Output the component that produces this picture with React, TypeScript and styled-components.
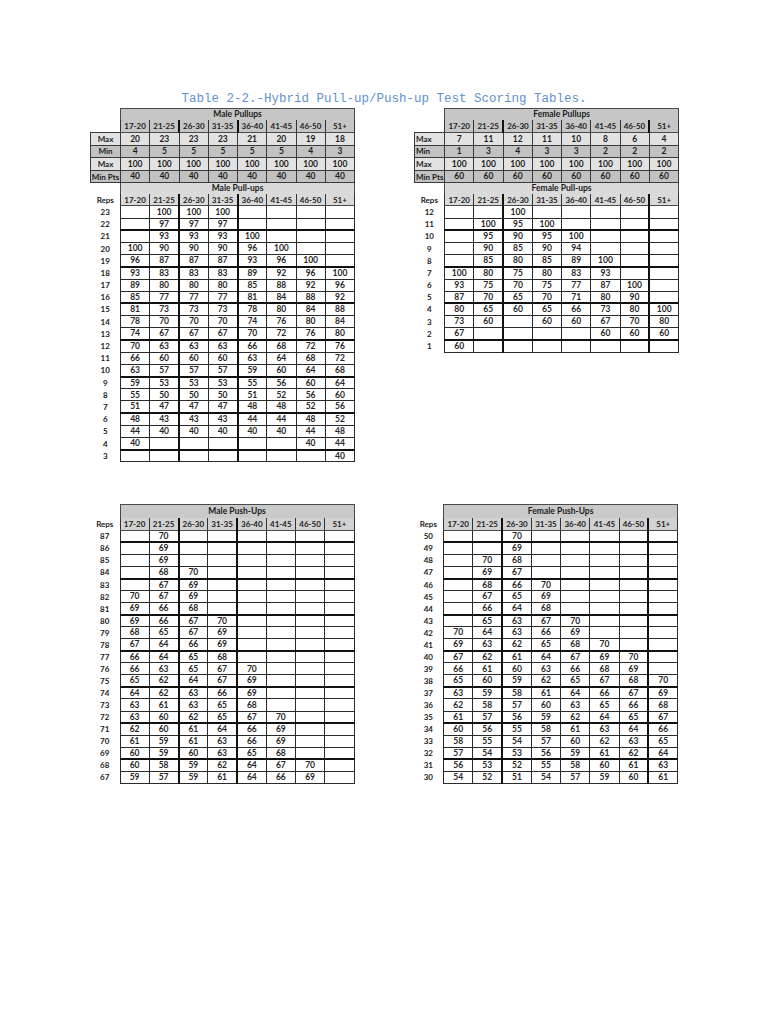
import * as React from 'react';
import styled, { createGlobalStyle } from 'styled-components';

type Cell = string | number;
type DataRow = [Cell, ...Cell[]];

const AGES = ['17-20', '21-25', '26-30', '31-35', '36-40', '41-45', '46-50', '51+'];

const GlobalStyle = createGlobalStyle`
  html, body {
    margin: 0;
    padding: 0;
    background: #ffffff;
  }
  body {
    font-family: Lato, "Liberation Sans", sans-serif;
  }
`;

const Sheet = styled.div`
  width: 768px;
  min-height: 1024px;
  box-sizing: border-box;
  padding-top: 92px;
`;

const Title = styled.h1`
  margin: 0;
  font: 400 12.5px/14px "Liberation Mono", monospace;
  color: #5f93cc;
  text-align: center;
`;

const Pair = styled.div<{ $top: number }>`
  display: flex;
  align-items: flex-start;
  gap: 59px;
  padding-left: 90px;
  margin-top: ${(p) => p.$top}px;
`;

const Grid = styled.table`
  border-collapse: collapse;
  table-layout: fixed;
  width: 264px;
  font: 700 8.5px/1 Lato, "Liberation Sans", sans-serif;
  color: #1c1c1c;

  td {
    padding: 0;
    text-align: center;
    vertical-align: middle;
    white-space: nowrap;
    overflow: hidden;
  }
`;

const Col = styled.col<{ $w: number }>`
  width: ${(p) => p.$w}px;
`;

const Line = styled.tr<{ $h: number }>`
  height: ${(p) => p.$h}px;
`;

const Blank = styled.td`
  border: none;
`;

const Banner = styled.td<{ $bg: string }>`
  background: ${(p) => p.$bg};
  border: 1px solid #4a4a4a;
  border-bottom: none;
`;

const AgeCell = styled.td<{ $bg: string; $thick?: boolean }>`
  background: ${(p) => p.$bg};
  border-left: ${(p) => (p.$thick ? '2px solid #111' : '1px solid #333')};
  border-right: 1px solid #333;
  border-bottom: 1px solid #4a4a4a;
  font-size: 8px;
`;

const StatLabel = styled.td<{ $bg: string; $align: 'left' | 'center' }>`
  background: ${(p) => p.$bg};
  border: 1px solid #3a3a3a;
  td& {
    text-align: ${(p) => p.$align};
    padding-left: ${(p) => (p.$align === 'left' ? '1px' : '0')};
  }
  font-size: 8px;
`;

const StatCell = styled.td<{ $bg: string }>`
  background: ${(p) => p.$bg};
  border: 1px solid #3a3a3a;
`;

const RepCell = styled.td`
  border: none;
  font-size: 8px;
`;

const DataCell = styled.td<{ $thickTop?: boolean; $thickLeft?: boolean }>`
  background: #ffffff;
  border: 1px solid #2a2a2a;
  border-top: ${(p) => (p.$thickTop ? '2px solid #111' : '1px solid #2a2a2a')};
  border-left: ${(p) => (p.$thickLeft ? '2px solid #111' : '1px solid #2a2a2a')};
  font-weight: 700;
  font-size: 8.5px;
  color: #262626;
`;

const Columns = () => (
  <colgroup>
    <Col $w={30} />
    {AGES.map((a) => (
      <Col key={a} $w={29.25} />
    ))}
  </colgroup>
);

interface BodyProps {
  rows: DataRow[];
  rowH: number;
  thickCols: number[];
  thickMod: number;
}

const Body = ({ rows, rowH, thickCols, thickMod }: BodyProps) => (
  <>
    {rows.map(([rep, ...vals], i) => (
      <Line key={String(rep)} $h={rowH}>
        <RepCell>{rep}</RepCell>
        {AGES.map((a, c) => (
          <DataCell key={a} $thickTop={i % 3 === thickMod} $thickLeft={thickCols.includes(c)}>
            {vals[c] ?? ''}
          </DataCell>
        ))}
      </Line>
    ))}
  </>
);

const STAT_BG = ['#e2e2e2', '#c2c2c2', '#e2e2e2', '#c2c2c2'];

interface PullupProps {
  title: string;
  subtitle: string;
  stats: [string, Cell[]][];
  labelAlign: 'left' | 'center';
  rows: DataRow[];
  thickCols: number[];
  thickMod: number;
}

const PullupTable = ({ title, subtitle, stats, labelAlign, rows, thickCols, thickMod }: PullupProps) => (
  <Grid>
    <Columns />
    <tbody>
      <Line $h={11}>
        <Blank />
        <Banner colSpan={8} $bg="#c6c6c6">{title}</Banner>
      </Line>
      <Line $h={13}>
        <Blank />
        {AGES.map((a, c) => (
          <AgeCell key={a} $bg="#c6c6c6" $thick={thickCols.includes(c)}>{a}</AgeCell>
        ))}
      </Line>
      {stats.map(([label, vals], i) => (
        <Line key={i} $h={12.6}>
          <StatLabel $bg={STAT_BG[i]} $align={labelAlign}>{label}</StatLabel>
          {vals.map((v, c) => (
            <StatCell key={c} $bg={STAT_BG[i]}>{v}</StatCell>
          ))}
        </Line>
      ))}
      <Line $h={11}>
        <Blank />
        <Banner colSpan={8} $bg="#dadada">{subtitle}</Banner>
      </Line>
      <Line $h={12}>
        <RepCell>Reps</RepCell>
        {AGES.map((a, c) => (
          <AgeCell key={a} $bg="#dadada" $thick={thickCols.includes(c)}>{a}</AgeCell>
        ))}
      </Line>
      <Body rows={rows} rowH={12.2} thickCols={thickCols} thickMod={thickMod} />
    </tbody>
  </Grid>
);

interface PushupProps {
  title: string;
  rows: DataRow[];
  thickCols: number[];
}

const PushupTable = ({ title, rows, thickCols }: PushupProps) => (
  <Grid>
    <Columns />
    <tbody>
      <Line $h={13}>
        <Blank />
        <Banner colSpan={8} $bg="#c9c9c9">{title}</Banner>
      </Line>
      <Line $h={12.5}>
        <RepCell>Reps</RepCell>
        {AGES.map((a, c) => (
          <AgeCell key={a} $bg="#d2d2d2" $thick={thickCols.includes(c)}>{a}</AgeCell>
        ))}
      </Line>
      <Body rows={rows} rowH={12.05} thickCols={thickCols} thickMod={1} />
    </tbody>
  </Grid>
);

const MALE_STATS: [string, Cell[]][] = [
  ['Max', [20, 23, 23, 23, 21, 20, 19, 18]],
  ['Min', [4, 5, 5, 5, 5, 5, 4, 3]],
  ['Max', [100, 100, 100, 100, 100, 100, 100, 100]],
  ['Min Pts', [40, 40, 40, 40, 40, 40, 40, 40]],
];

const FEMALE_STATS: [string, Cell[]][] = [
  ['Max', [7, 11, 12, 11, 10, 8, 6, 4]],
  ['Min', [1, 3, 4, 3, 3, 2, 2, 2]],
  ['Max', [100, 100, 100, 100, 100, 100, 100, 100]],
  ['Min Pts', [60, 60, 60, 60, 60, 60, 60, 60]],
];

const MALE_PULLUPS: DataRow[] = [
  [23, '', 100, 100, 100],
  [22, '', 97, 97, 97],
  [21, '', 93, 93, 93, 100],
  [20, 100, 90, 90, 90, 96, 100],
  [19, 96, 87, 87, 87, 93, 96, 100],
  [18, 93, 83, 83, 83, 89, 92, 96, 100],
  [17, 89, 80, 80, 80, 85, 88, 92, 96],
  [16, 85, 77, 77, 77, 81, 84, 88, 92],
  [15, 81, 73, 73, 73, 78, 80, 84, 88],
  [14, 78, 70, 70, 70, 74, 76, 80, 84],
  [13, 74, 67, 67, 67, 70, 72, 76, 80],
  [12, 70, 63, 63, 63, 66, 68, 72, 76],
  [11, 66, 60, 60, 60, 63, 64, 68, 72],
  [10, 63, 57, 57, 57, 59, 60, 64, 68],
  [9, 59, 53, 53, 53, 55, 56, 60, 64],
  [8, 55, 50, 50, 50, 51, 52, 56, 60],
  [7, 51, 47, 47, 47, 48, 48, 52, 56],
  [6, 48, 43, 43, 43, 44, 44, 48, 52],
  [5, 44, 40, 40, 40, 40, 40, 44, 48],
  [4, 40, '', '', '', '', '', 40, 44],
  [3, '', '', '', '', '', '', '', 40],
];

const FEMALE_PULLUPS: DataRow[] = [
  [12, '', '', 100],
  [11, '', 100, 95, 100],
  [10, '', 95, 90, 95, 100],
  [9, '', 90, 85, 90, 94],
  [8, '', 85, 80, 85, 89, 100],
  [7, 100, 80, 75, 80, 83, 93],
  [6, 93, 75, 70, 75, 77, 87, 100],
  [5, 87, 70, 65, 70, 71, 80, 90],
  [4, 80, 65, 60, 65, 66, 73, 80, 100],
  [3, 73, 60, '', 60, 60, 67, 70, 80],
  [2, 67, '', '', '', '', 60, 60, 60],
  [1, 60],
];

const MALE_PUSHUPS: DataRow[] = [
  [87, '', 70],
  [86, '', 69],
  [85, '', 69],
  [84, '', 68, 70],
  [83, '', 67, 69],
  [82, 70, 67, 69],
  [81, 69, 66, 68],
  [80, 69, 66, 67, 70],
  [79, 68, 65, 67, 69],
  [78, 67, 64, 66, 69],
  [77, 66, 64, 65, 68],
  [76, 66, 63, 65, 67, 70],
  [75, 65, 62, 64, 67, 69],
  [74, 64, 62, 63, 66, 69],
  [73, 63, 61, 63, 65, 68],
  [72, 63, 60, 62, 65, 67, 70],
  [71, 62, 60, 61, 64, 66, 69],
  [70, 61, 59, 61, 63, 66, 69],
  [69, 60, 59, 60, 63, 65, 68],
  [68, 60, 58, 59, 62, 64, 67, 70],
  [67, 59, 57, 59, 61, 64, 66, 69],
];

const FEMALE_PUSHUPS: DataRow[] = [
  [50, '', '', 70],
  [49, '', '', 69],
  [48, '', 70, 68],
  [47, '', 69, 67],
  [46, '', 68, 66, 70],
  [45, '', 67, 65, 69],
  [44, '', 66, 64, 68],
  [43, '', 65, 63, 67, 70],
  [42, 70, 64, 63, 66, 69],
  [41, 69, 63, 62, 65, 68, 70],
  [40, 67, 62, 61, 64, 67, 69, 70],
  [39, 66, 61, 60, 63, 66, 68, 69],
  [38, 65, 60, 59, 62, 65, 67, 68, 70],
  [37, 63, 59, 58, 61, 64, 66, 67, 69],
  [36, 62, 58, 57, 60, 63, 65, 66, 68],
  [35, 61, 57, 56, 59, 62, 64, 65, 67],
  [34, 60, 56, 55, 58, 61, 63, 64, 66],
  [33, 58, 55, 54, 57, 60, 62, 63, 65],
  [32, 57, 54, 53, 56, 59, 61, 62, 64],
  [31, 56, 53, 52, 55, 58, 60, 61, 63],
  [30, 54, 52, 51, 54, 57, 59, 60, 61],
];

export default function App() {
  return (
    <Sheet>
      <GlobalStyle />
      <Title>Table 2-2.-Hybrid Pull-up/Push-up Test Scoring Tables.</Title>
      <Pair $top={2}>
        <PullupTable
          title="Male Pullups"
          subtitle="Male Pull-ups"
          stats={MALE_STATS}
          labelAlign="center"
          rows={MALE_PULLUPS}
          thickCols={[2, 4]}
          thickMod={2}
        />
        <PullupTable
          title="Female Pullups"
          subtitle="Female Pull-ups"
          stats={FEMALE_STATS}
          labelAlign="left"
          rows={FEMALE_PULLUPS}
          thickCols={[2, 7]}
          thickMod={2}
        />
      </Pair>
      <Pair $top={42}>
        <PushupTable title="Male Push-Ups" rows={MALE_PUSHUPS} thickCols={[2, 4]} />
        <PushupTable title="Female Push-Ups" rows={FEMALE_PUSHUPS} thickCols={[2, 7]} />
      </Pair>
    </Sheet>
  );
}
